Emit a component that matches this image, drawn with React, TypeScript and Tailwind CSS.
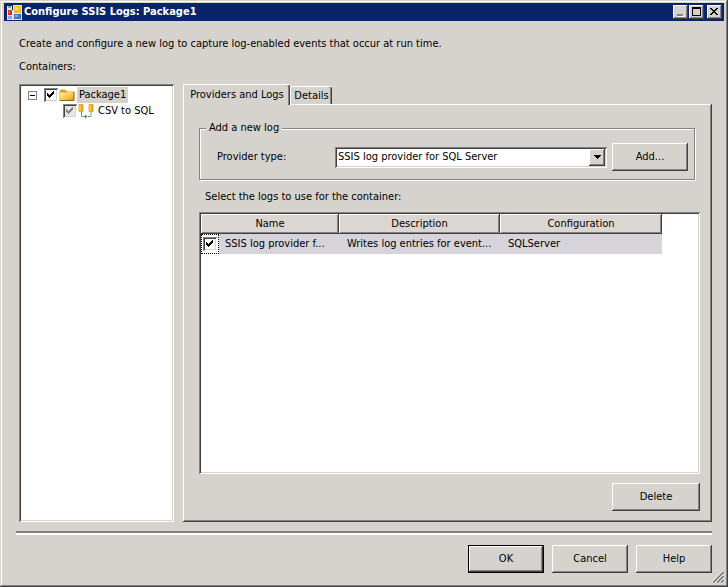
import { useState } from 'react';
import type { ButtonHTMLAttributes } from 'react';

const logs = [
  {
    id: 'sql',
    name: 'SSIS log provider f...',
    description: 'Writes log entries for event...',
    configuration: 'SQLServer',
  },
];

const raised =
  'shadow-[inset_-1px_-1px_0_#404040,inset_1px_1px_0_#ffffff,inset_-2px_-2px_0_#848284]';
const sunken =
  'shadow-[inset_1px_1px_0_#848284,inset_-1px_-1px_0_#ffffff,inset_2px_2px_0_#404040,inset_-2px_-2px_0_#d6d3ce]';

interface DialogButtonProps extends ButtonHTMLAttributes<HTMLButtonElement> {
  primary?: boolean;
}

function DialogButton({ primary, className = 'w-19', ...props }: DialogButtonProps) {
  return (
    <button
      type="button"
      className={`h-7 shrink-0 bg-[#d6d3ce] text-center ${raised} ${className} ${
        primary ? 'border border-black' : ''
      }`}
      {...props}
    />
  );
}

interface CheckBoxProps {
  id: string;
  muted?: boolean;
}

function CheckBox({ id, muted }: CheckBoxProps) {
  const [checked, setChecked] = useState(true);

  return (
    <span className="grid size-[14px] shrink-0">
      <input
        id={id}
        type="checkbox"
        checked={checked}
        onChange={(e) => setChecked(e.target.checked)}
        className={`col-start-1 row-start-1 size-[14px] appearance-none ${sunken} ${
          muted ? 'bg-[#e8e6e3]' : 'bg-white'
        }`}
      />
      {checked && (
        <svg
          viewBox="0 0 14 14"
          shapeRendering="crispEdges"
          className={`pointer-events-none col-start-1 row-start-1 size-[14px] ${
            muted ? 'fill-[#848284]' : 'fill-black'
          }`}
        >
          <path d="M3 5h1v1h1v1h1v-1h1v-1h1v-1h1v-1h1v3h-1v1h-1v1h-1v1h-1v1h-1v-1h-1v-1h-1z" />
        </svg>
      )}
    </span>
  );
}

function AppIcon() {
  return (
    <svg viewBox="0 0 15 15" className="size-[15px] shrink-0">
      <path d="M0 1h5v4H0zM0 5h6v10H0zM6 0h9v15H6z" fill="#dfe5ee" />
      <rect x="1" y="1" width="3" height="2" fill="#8c9cc0" />
      <rect x="1" y="5" width="4" height="5" fill="#cc3420" />
      <rect x="2" y="6" width="1" height="2" fill="#f0907c" />
      <rect x="1" y="11" width="4" height="3" fill="#8fa8d8" />
      <rect x="7" y="1" width="7" height="7" fill="#f4bc28" />
      <rect x="8" y="2" width="3" height="3" fill="#fbdc78" />
      <rect x="7" y="9" width="7" height="5" fill="#4472c4" />
      <rect x="8" y="10" width="3" height="2" fill="#84a8e4" />
    </svg>
  );
}

function FolderIcon() {
  return (
    <svg viewBox="0 0 16 14" className="h-[14px] w-4 shrink-0">
      <defs>
        <linearGradient id="folder" x1="0" y1="0" x2="1" y2="1">
          <stop offset="0" stopColor="#fff0a8" />
          <stop offset="0.6" stopColor="#f4c84c" />
          <stop offset="1" stopColor="#d8961c" />
        </linearGradient>
      </defs>
      <path d="M0.500 3 2 1.500h4L7.500 3H15v9.500H0.500z" fill="#d8a030" />
      <path d="M1 4.500h6.500l1.500-1.500h6.500l-0.500 9H1z" fill="url(#folder)" />
      <path d="M0.500 12.500H15V4" fill="none" stroke="#946410" strokeWidth="1" />
    </svg>
  );
}

function DataFlowIcon() {
  return (
    <svg viewBox="0 0 16 16" className="size-4 shrink-0">
      <path d="M3.500 9v4.500h4M13 9v4.500h-3" fill="none" stroke="#6ca860" />
      <path d="M7 11.500 9.500 13.500 7 15.500z" fill="#3c8c34" />
      <rect x="0.500" y="1" width="5" height="8" rx="1" fill="#e4a820" />
      <path d="M2 2v6" stroke="#fbe08a" strokeWidth="1" />
      <rect x="10.500" y="1" width="5" height="8" rx="1" fill="#e4a820" />
      <path d="M12 2v6" stroke="#fbe08a" strokeWidth="1" />
    </svg>
  );
}

function TitleBar() {
  const button = `grid h-[14px] w-[15px] place-items-center bg-[#d6d3ce] ${raised}`;

  return (
    <header className="flex h-[18px] items-center bg-[#0a246a] pr-[2px] pl-[3px] text-white">
      <AppIcon />
      <h1 className="ml-[2px] flex-1 text-[11px] font-bold">Configure SSIS Logs: Package1</h1>
      <button type="button" aria-label="Minimize" className={button}>
        <svg viewBox="0 0 15 14" shapeRendering="crispEdges" className="h-[14px] w-[15px]">
          <path d="M5 10h6v2H5z" fill="#fff" />
          <path d="M4 9h6v2H4z" fill="#848284" />
        </svg>
      </button>
      <button type="button" aria-label="Maximize" className={`ml-px ${button}`}>
        <svg viewBox="0 0 15 14" shapeRendering="crispEdges" className="h-[14px] w-[15px]">
          <path d="M3 2h9v9H3zM4 4v6h7V4z" fillRule="evenodd" />
        </svg>
      </button>
      <button type="button" aria-label="Close" className={`ml-[3px] ${button}`}>
        <svg viewBox="0 0 15 14" shapeRendering="crispEdges" className="h-[14px] w-[15px]">
          <path d="M3 3h2v1h1v1h2v-1h1v-1h2v1h-1v1h-1v1h-1v1h1v1h1v1h1v1h-2v-1h-1v-1h-2v1h-1v1h-2v-1h1v-1h1v-1h1v-1h-1v-1h-1v-1h-1z" />
        </svg>
      </button>
    </header>
  );
}

function ContainerTree() {
  return (
    <ul className={`w-[155px] shrink-0 bg-white pt-[3px] pl-[9px] ${sunken}`}>
      <li>
        <div className="flex h-4 items-center">
          <button
            type="button"
            aria-label="Collapse Package1"
            className="grid size-[9px] place-items-center border border-[#848284]"
          >
            <span className="h-px w-[5px] bg-black" />
          </button>
          <span className="ml-[7px] flex items-center">
            <CheckBox id="package1" />
          </span>
          <span className="ml-px flex">
            <FolderIcon />
          </span>
          <label htmlFor="package1" className="ml-[2px] bg-[#d6d3ce] px-[2px] leading-4">
            Package1
          </label>
        </div>
        <ul>
          <li className="flex h-4 items-center pl-[35px]">
            <CheckBox id="csv-to-sql" muted />
            <span className="ml-px flex">
              <DataFlowIcon />
            </span>
            <label htmlFor="csv-to-sql" className="ml-[2px] px-[2px] leading-4">
              CSV to SQL
            </label>
          </li>
        </ul>
      </li>
    </ul>
  );
}

function ProviderSelect() {
  return (
    <span className={`relative flex h-[21px] min-w-0 flex-1 bg-white p-[2px] ${sunken}`}>
      <select id="provider" className="w-full appearance-none bg-transparent pr-4 pl-px outline-none">
        <option>SSIS log provider for SQL Server</option>
      </select>
      <span
        className={`pointer-events-none absolute inset-y-[2px] right-[2px] grid w-4 place-items-center bg-[#d6d3ce] ${raised}`}
      >
        <svg viewBox="0 0 7 4" shapeRendering="crispEdges" className="h-1 w-[7px]">
          <path d="M0 0h7v1h-1v1h-1v1h-1v1h-1v-1h-1v-1h-1v-1h-1z" />
        </svg>
      </span>
    </span>
  );
}

function LogTable() {
  const head = `h-5 bg-[#dcd6d3] p-0 text-center font-normal ${raised}`;

  return (
    <div className={`min-h-0 flex-1 bg-white p-[2px] ${sunken}`}>
      <table className="w-[461px] table-fixed border-collapse">
        <colgroup>
          <col className="w-[138px]" />
          <col className="w-[161px]" />
          <col className="w-[162px]" />
        </colgroup>
        <thead>
          <tr>
            <th className={head}>Name</th>
            <th className={head}>Description</th>
            <th className={head}>Configuration</th>
          </tr>
        </thead>
        <tbody>
          {logs.map((log) => (
            <tr key={log.id} className="h-5 bg-[#d6d3da]">
              <td className="p-0">
                <div className="flex items-center">
                  <span className="grid h-5 w-[18px] place-items-center border border-dotted border-black bg-white">
                    <CheckBox id={log.id} />
                  </span>
                  <label htmlFor={log.id} className="ml-[6px] whitespace-nowrap">
                    {log.name}
                  </label>
                </div>
              </td>
              <td className="py-0 pr-0 pl-2 whitespace-nowrap">{log.description}</td>
              <td className="py-0 pr-0 pl-2">{log.configuration}</td>
            </tr>
          ))}
        </tbody>
      </table>
    </div>
  );
}

function ProvidersPanel() {
  return (
    <div
      role="tabpanel"
      className={`flex min-h-0 flex-1 flex-col pt-4 pr-3 pb-[11px] pl-4 ${raised}`}
    >
      <fieldset className="mr-[5px] border border-[#848284] pr-[6px] pb-2 pl-[17px] shadow-[1px_1px_0_#ffffff,inset_1px_1px_0_#ffffff]">
        <legend className="-ml-[11px] bg-[#d6d3ce] px-[3px] leading-4">Add a new log</legend>
        <div className="flex items-center pt-[7px]">
          <label htmlFor="provider" className="w-[118px]">
            Provider type:
          </label>
          <ProviderSelect />
          <DialogButton className="ml-[5px] w-19">Add...</DialogButton>
        </div>
      </fieldset>
      <p className="mt-[9px] mb-[7px] pl-[6px] leading-4">
        Select the logs to use for the container:
      </p>
      <LogTable />
      <div className="mt-[9px] flex justify-end">
        <DialogButton className="w-22">Delete</DialogButton>
      </div>
    </div>
  );
}

function DetailsPanel() {
  return <div role="tabpanel" className={`flex-1 ${raised}`} />;
}

export default function App() {
  const [tab, setTab] = useState('providers');
  const tabStyle = (active: boolean) =>
    `rounded-t-[2px] border-t border-l border-t-white border-l-white bg-[#d6d3ce] shadow-[inset_-1px_0_0_#404040,inset_-2px_0_0_#848284] ${
      active ? 'z-10 -mb-px h-[21px] w-[107px]' : 'h-[18px] w-[42px]'
    }`;

  return (
    <main
      className={`flex min-h-screen flex-col bg-[#d6d3ce] p-1 pt-[3px] font-['DejaVu_Sans_Condensed','Noto_Sans',sans-serif] text-[11px] leading-4 text-black shadow-[inset_-1px_-1px_0_#404040,inset_1px_1px_0_#d6d3ce,inset_-2px_-2px_0_#848284,inset_2px_2px_0_#ffffff]`}
    >
      <TitleBar />
      <p className="mt-[15px] px-[15px]">
        Create and configure a new log to capture log-enabled events that occur at run time.
      </p>
      <p className="mt-[7px] px-[15px]">Containers:</p>

      <div className="mt-[9px] flex min-h-0 flex-1 pr-3 pl-[15px]">
        <ContainerTree />
        <section className="ml-[9px] flex min-w-0 flex-1 flex-col">
          <div role="tablist" className="flex items-end">
            <button
              type="button"
              role="tab"
              aria-selected={tab === 'providers'}
              onClick={() => setTab('providers')}
              className={tabStyle(tab === 'providers')}
            >
              Providers and Logs
            </button>
            <button
              type="button"
              role="tab"
              aria-selected={tab === 'details'}
              onClick={() => setTab('details')}
              className={tabStyle(tab === 'details')}
            >
              Details
            </button>
          </div>
          {tab === 'providers' ? <ProvidersPanel /> : <DetailsPanel />}
        </section>
      </div>

      <hr className="mt-[9px] mr-3 ml-3 h-1 border-t-2 border-b-2 border-t-[#848284] border-b-white" />

      <footer className="flex items-end pt-[10px]">
        <div className="mb-[10px] flex flex-1 justify-end gap-2">
          <DialogButton primary>OK</DialogButton>
          <DialogButton>Cancel</DialogButton>
          <DialogButton>Help</DialogButton>
        </div>
        <svg viewBox="0 0 12 12" className="size-3 shrink-0">
          <path d="M0 11 11 0M4 11l7-7M8 11l3-3" stroke="#fff" />
          <path d="M1 11.500 11.500 1M5 11.500 11.500 5M9 11.500 11.500 9" stroke="#6c6a6c" strokeWidth="1.400" />
        </svg>
      </footer>
    </main>
  );
}
